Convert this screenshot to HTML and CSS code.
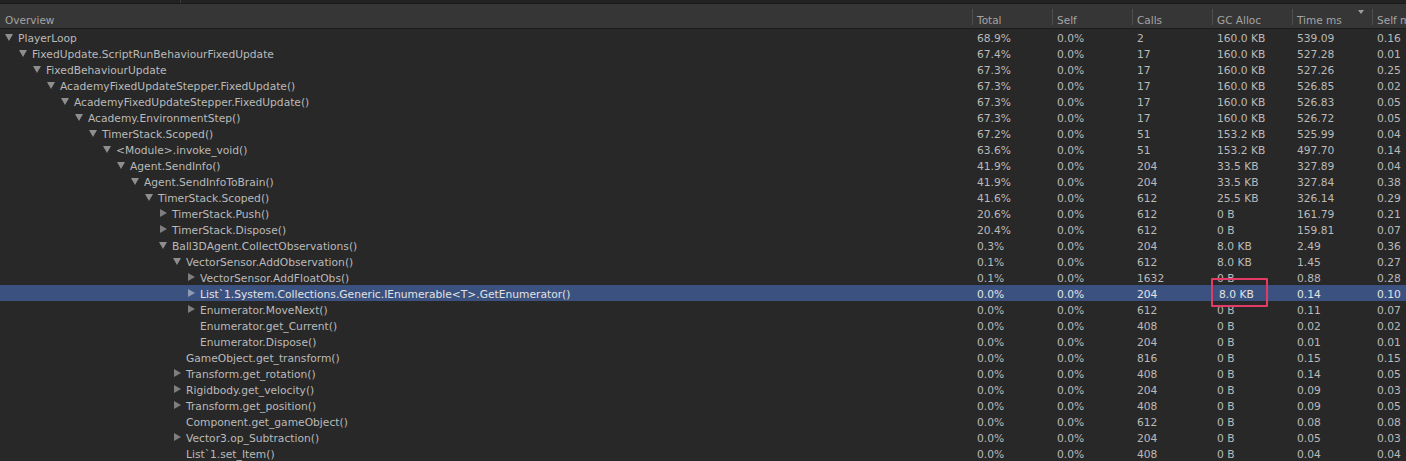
FILE: index.html
```html
<!DOCTYPE html>
<html lang="en">
<head>
    <meta charset="UTF-8">
    <title>Profiler - Hierarchy</title>
    <link rel="stylesheet" href="styles.css">
</head>
<body>
    <div class="toolbar-edge">
        <span class="edge-seg"></span>
    </div>

    <div class="header">
        <div class="hcell">Overview</div>
        <div class="hcell sep">Total</div>
        <div class="hcell sep">Self</div>
        <div class="hcell sep">Calls</div>
        <div class="hcell sep">GC Alloc</div>
        <div class="hcell sep sorted">Time ms<span class="sort-arrow"></span></div>
        <div class="hcell sep">Self ms</div>
    </div>

    <div class="tree">
        <div class="row"><div class="name d0"><span class="tog open"></span>PlayerLoop</div><div>68.9%</div><div>0.0%</div><div>2</div><div>160.0 KB</div><div>539.09</div><div>0.16</div></div>
        <div class="row"><div class="name d1"><span class="tog open"></span>FixedUpdate.ScriptRunBehaviourFixedUpdate</div><div>67.4%</div><div>0.0%</div><div>17</div><div>160.0 KB</div><div>527.28</div><div>0.01</div></div>
        <div class="row"><div class="name d2"><span class="tog open"></span>FixedBehaviourUpdate</div><div>67.3%</div><div>0.0%</div><div>17</div><div>160.0 KB</div><div>527.26</div><div>0.25</div></div>
        <div class="row"><div class="name d3"><span class="tog open"></span>AcademyFixedUpdateStepper.FixedUpdate()</div><div>67.3%</div><div>0.0%</div><div>17</div><div>160.0 KB</div><div>526.85</div><div>0.02</div></div>
        <div class="row"><div class="name d4"><span class="tog open"></span>AcademyFixedUpdateStepper.FixedUpdate()</div><div>67.3%</div><div>0.0%</div><div>17</div><div>160.0 KB</div><div>526.83</div><div>0.05</div></div>
        <div class="row"><div class="name d5"><span class="tog open"></span>Academy.EnvironmentStep()</div><div>67.3%</div><div>0.0%</div><div>17</div><div>160.0 KB</div><div>526.72</div><div>0.05</div></div>
        <div class="row"><div class="name d6"><span class="tog open"></span>TimerStack.Scoped()</div><div>67.2%</div><div>0.0%</div><div>51</div><div>153.2 KB</div><div>525.99</div><div>0.04</div></div>
        <div class="row"><div class="name d7"><span class="tog open"></span>&lt;Module&gt;.invoke_void()</div><div>63.6%</div><div>0.0%</div><div>51</div><div>153.2 KB</div><div>497.70</div><div>0.14</div></div>
        <div class="row"><div class="name d8"><span class="tog open"></span>Agent.SendInfo()</div><div>41.9%</div><div>0.0%</div><div>204</div><div>33.5 KB</div><div>327.89</div><div>0.04</div></div>
        <div class="row"><div class="name d9"><span class="tog open"></span>Agent.SendInfoToBrain()</div><div>41.9%</div><div>0.0%</div><div>204</div><div>33.5 KB</div><div>327.84</div><div>0.38</div></div>
        <div class="row"><div class="name d10"><span class="tog open"></span>TimerStack.Scoped()</div><div>41.6%</div><div>0.0%</div><div>612</div><div>25.5 KB</div><div>326.14</div><div>0.29</div></div>
        <div class="row"><div class="name d11"><span class="tog closed"></span>TimerStack.Push()</div><div>20.6%</div><div>0.0%</div><div>612</div><div>0 B</div><div>161.79</div><div>0.21</div></div>
        <div class="row"><div class="name d11"><span class="tog closed"></span>TimerStack.Dispose()</div><div>20.4%</div><div>0.0%</div><div>612</div><div>0 B</div><div>159.81</div><div>0.07</div></div>
        <div class="row"><div class="name d11"><span class="tog open"></span>Ball3DAgent.CollectObservations()</div><div>0.3%</div><div>0.0%</div><div>204</div><div>8.0 KB</div><div>2.49</div><div>0.36</div></div>
        <div class="row"><div class="name d12"><span class="tog open"></span>VectorSensor.AddObservation()</div><div>0.1%</div><div>0.0%</div><div>612</div><div>8.0 KB</div><div>1.45</div><div>0.27</div></div>
        <div class="row"><div class="name d13"><span class="tog closed"></span>VectorSensor.AddFloatObs()</div><div>0.1%</div><div>0.0%</div><div>1632</div><div>0 B</div><div>0.88</div><div>0.28</div></div>
        <div class="row selected"><div class="name d13"><span class="tog closed"></span>List`1.System.Collections.Generic.IEnumerable&lt;T&gt;.GetEnumerator()</div><div>0.0%</div><div>0.0%</div><div>204</div><div class="marked">8.0 KB<span class="mark-box"></span></div><div>0.14</div><div>0.10</div></div>
        <div class="row"><div class="name d13"><span class="tog closed"></span>Enumerator.MoveNext()</div><div>0.0%</div><div>0.0%</div><div>612</div><div>0 B</div><div>0.11</div><div>0.07</div></div>
        <div class="row"><div class="name d13"><span class="tog"></span>Enumerator.get_Current()</div><div>0.0%</div><div>0.0%</div><div>408</div><div>0 B</div><div>0.02</div><div>0.02</div></div>
        <div class="row"><div class="name d13"><span class="tog"></span>Enumerator.Dispose()</div><div>0.0%</div><div>0.0%</div><div>204</div><div>0 B</div><div>0.01</div><div>0.01</div></div>
        <div class="row"><div class="name d12"><span class="tog"></span>GameObject.get_transform()</div><div>0.0%</div><div>0.0%</div><div>816</div><div>0 B</div><div>0.15</div><div>0.15</div></div>
        <div class="row"><div class="name d12"><span class="tog closed"></span>Transform.get_rotation()</div><div>0.0%</div><div>0.0%</div><div>408</div><div>0 B</div><div>0.14</div><div>0.05</div></div>
        <div class="row"><div class="name d12"><span class="tog closed"></span>Rigidbody.get_velocity()</div><div>0.0%</div><div>0.0%</div><div>204</div><div>0 B</div><div>0.09</div><div>0.03</div></div>
        <div class="row"><div class="name d12"><span class="tog closed"></span>Transform.get_position()</div><div>0.0%</div><div>0.0%</div><div>408</div><div>0 B</div><div>0.09</div><div>0.05</div></div>
        <div class="row"><div class="name d12"><span class="tog"></span>Component.get_gameObject()</div><div>0.0%</div><div>0.0%</div><div>612</div><div>0 B</div><div>0.08</div><div>0.08</div></div>
        <div class="row"><div class="name d12"><span class="tog closed"></span>Vector3.op_Subtraction()</div><div>0.0%</div><div>0.0%</div><div>204</div><div>0 B</div><div>0.05</div><div>0.03</div></div>
        <div class="row"><div class="name d12"><span class="tog"></span>List`1.set_Item()</div><div>0.0%</div><div>0.0%</div><div>408</div><div>0 B</div><div>0.04</div><div>0.04</div></div>
    </div>
</body>
</html>
```

FILE: styles.css
```css
html, body {
    margin: 0;
    padding: 0;
    overflow: hidden;
}
body {
    background: #282828;
    color: #bababa;
    font-family: "DejaVu Sans", sans-serif;
    font-size: 10.7px;
    width: 1406px;
    height: 461px;
}
.toolbar-edge {
    height: 3px;
    background: #222;
    border-bottom: 1px solid #1a1a1a;
    display: flex;
}
.edge-seg {
    width: 180px;
    border-right: 1px solid #3a3a3a;
}
.header {
    display: grid;
    grid-template-columns: 972px repeat(5, 80px) 1fr;
    height: 24px;
    background: #363636;
    border-bottom: 1px solid #1c1c1c;
    color: #a4a4a4;
    font-size: 10.5px;
}
.hcell {
    position: relative;
    padding: 4px 0 0 5px;
    line-height: 24px;
    white-space: nowrap;
    overflow: hidden;
}
.hcell.sep {
    border-left: 1px solid #4e4e4e;
    margin: 5px 0 3px;
    padding: 0 0 0 4px;
    line-height: 22px;
}
.sort-arrow {
    position: absolute;
    right: 8px;
    top: 1px;
    border-left: 3px solid transparent;
    border-right: 3px solid transparent;
    border-top: 4px solid #9c9c9c;
}
.row {
    display: grid;
    grid-template-columns: 972px repeat(5, 80px) 1fr;
    height: 16px;
    line-height: 19px;
    white-space: nowrap;
}
.row > div {
    padding-left: 5px;
    height: 16px;
    overflow: hidden;
}
.row.selected {
    background: #3b5280;
    color: #e2e2e2;
}
.name {
    display: flex;
    align-items: flex-start;
}
.tog {
    flex: none;
    width: 13px;
    height: 16px;
    position: relative;
}
.tog.open::before {
    content: "";
    position: absolute;
    left: 0;
    top: 5px;
    border-left: 4px solid transparent;
    border-right: 4px solid transparent;
    border-top: 7px solid #8e8e8e;
}
.tog.closed::before {
    content: "";
    position: absolute;
    left: 1px;
    top: 4px;
    border-top: 4px solid transparent;
    border-bottom: 4px solid transparent;
    border-left: 7px solid #7e7e7e;
}
.row.selected .tog.closed::before {
    border-left-color: #8f9bb4;
}
.row > .d0 { padding-left: 5px; }
.row > .d1 { padding-left: 19px; }
.row > .d2 { padding-left: 33px; }
.row > .d3 { padding-left: 47px; }
.row > .d4 { padding-left: 61px; }
.row > .d5 { padding-left: 75px; }
.row > .d6 { padding-left: 89px; }
.row > .d7 { padding-left: 103px; }
.row > .d8 { padding-left: 117px; }
.row > .d9 { padding-left: 131px; }
.row > .d10 { padding-left: 145px; }
.row > .d11 { padding-left: 159px; }
.row > .d12 { padding-left: 173px; }
.row > .d13 { padding-left: 187px; }
.row > .marked {
    position: relative;
    overflow: visible;
    padding-left: 7px;
}
.mark-box {
    position: absolute;
    left: -1px;
    top: -7px;
    width: 53px;
    height: 25px;
    border: 2px solid #e33a66;
    border-radius: 1px;
}
```
